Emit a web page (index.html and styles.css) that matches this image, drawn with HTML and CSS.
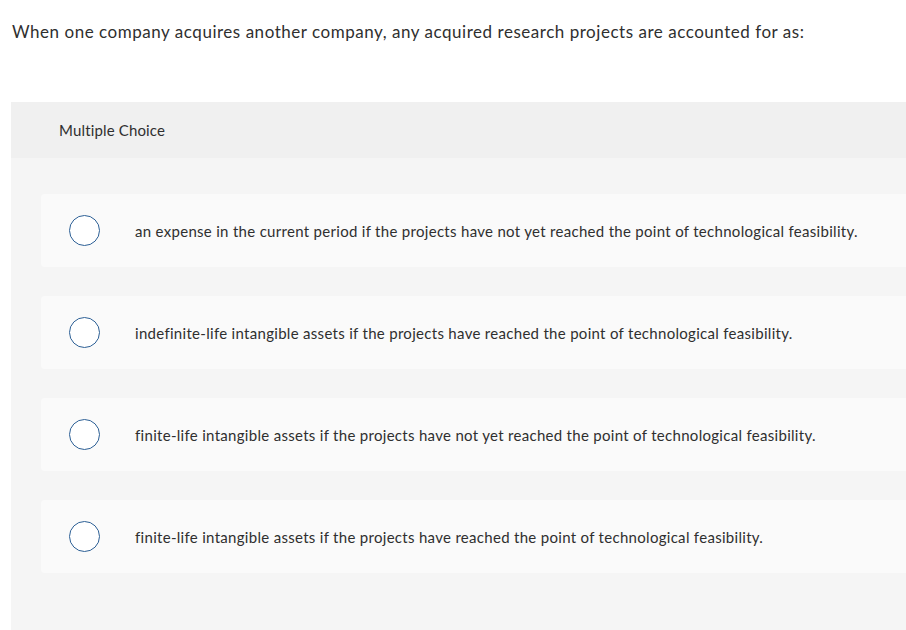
FILE: index.html
```html
<!DOCTYPE html>
<html>
<head>
<meta charset="utf-8">
<link rel="stylesheet" href="styles.css">
</head>
<body>
<p class="question">When one company acquires another company, any acquired research projects are accounted for as:</p>
<section class="panel">
  <div class="panel-head">Multiple Choice</div>
  <div class="panel-body">
    <label class="option"><span class="radio"></span><span class="opt-text">an expense in the current period if the projects have not yet reached the point of technological feasibility.</span></label>
    <label class="option"><span class="radio"></span><span class="opt-text">indefinite-life intangible assets if the projects have reached the point of technological feasibility.</span></label>
    <label class="option"><span class="radio"></span><span class="opt-text">finite-life intangible assets if the projects have not yet reached the point of technological feasibility.</span></label>
    <label class="option"><span class="radio"></span><span class="opt-text">finite-life intangible assets if the projects have reached the point of technological feasibility.</span></label>
  </div>
</section>
</body>
</html>
```
FILE: styles.css
```css
html, body {
  margin: 0;
  padding: 0;
  background: #ffffff;
}
body {
  font-family: "Lato", "Open Sans", sans-serif;
  font-variant-ligatures: none;
  color: #2f2f2f;
  overflow: hidden;
}
.question {
  margin: 0;
  padding: 20px 0 0 12px;
  font-size: 17px;
  letter-spacing: 0.53px;
  line-height: 24px;
  height: 82px;
  box-sizing: border-box;
}
.panel {
  margin-left: 11px;
  margin-top: 20px;
  background: #f5f5f5;
  height: 528px;
}
.panel-head {
  background: #f0f0f0;
  height: 56px;
  display: flex;
  align-items: center;
  padding-left: 48px;
  font-size: 15px;
  letter-spacing: 0.15px;
}
.panel-body {
  padding: 36px 0 0 30px;
  display: flex;
  flex-direction: column;
  gap: 29px;
}
.option {
  display: flex;
  align-items: center;
  height: 73px;
  background: #fafafa;
  border-radius: 4px 0 0 4px;
  padding-left: 28px;
  font-size: 15px;
  letter-spacing: 0.3px;
}
.radio {
  width: 29px;
  height: 29px;
  border: 1.5px solid #2c5f95;
  border-radius: 50%;
  background: #ffffff;
  flex: none;
}
.opt-text {
  margin-left: 35px;
}
```
